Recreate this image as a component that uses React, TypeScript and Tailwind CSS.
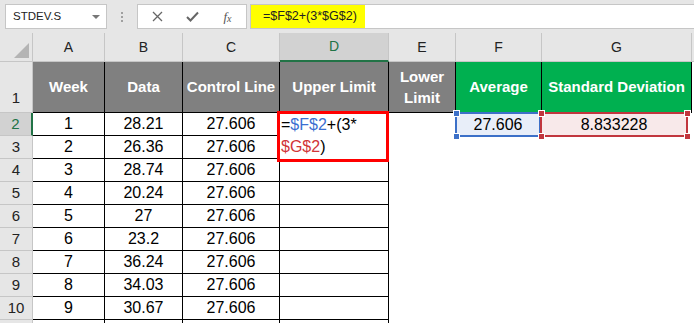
import React from "react";

const rows: [string, string, string][] = [
  ["1", "28.21", "27.606"],
  ["2", "26.36", "27.606"],
  ["3", "28.74", "27.606"],
  ["4", "20.24", "27.606"],
  ["5", "27", "27.606"],
  ["6", "23.2", "27.606"],
  ["7", "36.24", "27.606"],
  ["8", "34.03", "27.606"],
  ["9", "30.67", "27.606"],
];

const colLetters = ["A", "B", "C", "D", "E", "F", "G"];

function Handle({ color, x, y }: { color: string; x: number; y: number }) {
  return (
    <div
      className="absolute w-[7px] h-[7px] border border-white"
      style={{ left: x - 3, top: y - 3, backgroundColor: color }}
    />
  );
}

export default function App() {
  return (
    <div className="relative w-[694px] h-[323px] overflow-hidden bg-white font-['Liberation_Sans',Arial,sans-serif] text-black">
      {/* Formula bar */}
      <div className="h-[33px] bg-[#e6e6e6] flex items-start pt-[4px]">
        <div className="ml-[5px] w-[102px] h-[25px] bg-white border border-[#c6c6c6] flex items-center pl-[7px] pr-[6px] text-[11.5px] text-[#222]">
          <span className="flex-1">STDEV.S</span>
          <span className="w-0 h-0 border-l-[4px] border-r-[4px] border-t-[4px] border-l-transparent border-r-transparent border-t-[#777]" />
        </div>
        <div className="w-[30px] h-[25px] flex flex-col items-center justify-center gap-[2px]">
          <span className="w-[2px] h-[2px] bg-[#a0a0a0]" />
          <span className="w-[2px] h-[2px] bg-[#a0a0a0]" />
          <span className="w-[2px] h-[2px] bg-[#a0a0a0]" />
        </div>
        <div className="w-[110px] h-[25px] bg-white border border-[#c6c6c6] flex items-center">
          <div className="w-[37px] flex justify-center pl-[2px]">
            <svg width="11" height="11" viewBox="0 0 11 11">
              <path d="M1 1 L10 10 M10 1 L1 10" stroke="#666" strokeWidth="1.3" fill="none" />
            </svg>
          </div>
          <div className="w-[34px] flex justify-center">
            <svg width="13" height="11" viewBox="0 0 13 11">
              <path d="M1 6 L4.5 9.5 L12 1.5" stroke="#666" strokeWidth="2" fill="none" />
            </svg>
          </div>
          <div className="w-[37px] flex justify-center font-['Liberation_Serif',serif] italic text-[#555] text-[13px]">
            <span>f</span>
            <span className="text-[10px] mt-[4px]">x</span>
          </div>
        </div>
        <div className="ml-[3px] flex-1 h-[25px] bg-white border-y border-l border-[#c6c6c6] flex items-stretch">
          <div className="w-[114px] bg-[#ffff00] flex items-center pl-[12px] text-[12.5px] text-[#222]">
            =$F$2+(3*$G$2)
          </div>
        </div>
      </div>

      {/* Grid */}
      <div className="grid grid-cols-[33px_72px_78px_97px_109px_67px_86px_150px_1fr] grid-rows-[29px_51px_repeat(10,23px)]">
        {/* Column headers */}
        <div className="relative bg-[#e6e6e6] border-r border-b border-[#c6c6c6]">
          <svg className="absolute right-[3px] bottom-[3px]" width="15" height="15" viewBox="0 0 15 15">
            <path d="M15 0 L15 15 L0 15 Z" fill="#b4b4b4" />
          </svg>
        </div>
        {colLetters.map((l) =>
          l === "D" ? (
            <div
              key={l}
              className="bg-[#d2d2d2] border-r border-[#c6c6c6] border-b-2 border-b-[#217346] flex items-center justify-center text-[14px] text-[#217346]"
            >
              {l}
            </div>
          ) : (
            <div
              key={l}
              className="bg-[#e6e6e6] border-r border-b border-[#c6c6c6] flex items-center justify-center text-[14px] text-[#222]"
            >
              {l}
            </div>
          )
        )}
        <div className="bg-[#e6e6e6] border-b border-[#c6c6c6]" />

        {/* Row 1 */}
        <div className="bg-[#e6e6e6] border-r border-b border-[#c6c6c6] flex items-end justify-center pb-[3px] text-[15px] text-[#222]">
          1
        </div>
        {["Week", "Data", "Control Line", "Upper Limit"].map((t) => (
          <div
            key={t}
            className="bg-[#808080] border-r border-b border-black flex items-center justify-center text-white font-bold text-[15px]"
          >
            {t}
          </div>
        ))}
        <div className="bg-[#808080] border-r border-b border-black flex items-center justify-center text-center text-white font-bold text-[15px] leading-[21px]">
          Lower
          <br />
          Limit
        </div>
        <div className="bg-[#00b050] border-r border-b border-black flex items-center justify-center text-white font-bold text-[15px]">
          Average
        </div>
        <div className="bg-[#00b050] border-r border-b border-black flex items-center justify-center text-white font-bold text-[15px]">
          Standard Deviation
        </div>
        <div />

        {/* Data rows */}
        {rows.map((r, i) => {
          const n = i + 2;
          const sel = n === 2;
          return (
            <React.Fragment key={n}>
              <div
                className={
                  sel
                    ? "bg-[#d2d2d2] border-r-2 border-r-[#217346] border-b border-b-[#c6c6c6] flex items-center justify-center text-[15px] text-[#217346]"
                    : "bg-[#e6e6e6] border-r border-b border-[#c6c6c6] flex items-center justify-center text-[15px] text-[#222]"
                }
              >
                {n}
              </div>
              <div className="border-r border-b border-black flex items-center justify-center text-[16px]">
                {r[0]}
              </div>
              <div className="border-r border-b border-black flex items-center justify-center text-[16px]">
                {r[1]}
              </div>
              <div className="border-r border-b border-black flex items-center justify-center text-[16px]">
                {r[2]}
              </div>
              <div className="border-r border-b border-black" />
              <div />
              <div />
              <div />
              <div />
            </React.Fragment>
          );
        })}
        {/* Row 11 (only its top edge is visible) */}
        <div className="bg-[#e6e6e6] border-r border-[#c6c6c6]" />
        <div className="border-r border-black" />
        <div className="border-r border-black" />
        <div className="border-r border-black" />
        <div className="border-r border-black" />
        <div />
        <div />
        <div />
        <div />
      </div>

      {/* Red box around D2:D3 with formula */}
      <div className="absolute left-[277px] top-[111px] w-[112px] h-[51px] border-[3px] border-[#ff0000] bg-white" />
      <div className="absolute left-[281px] top-[114px] text-[16px] leading-[22px]">
        <div>
          =<span className="text-[#3b6fd1]">$F$2</span>+(3*
        </div>
        <div>
          <span className="text-[#d13438]">$G$2</span>)
        </div>
      </div>

      {/* F2 selection */}
      <div className="absolute left-[455px] top-[112px] w-[86px] h-[25px] border-2 border-[#3c70c8] bg-[#e8eef9] flex items-center justify-center text-[16px]">
        27.606
      </div>
      {/* G2 selection */}
      <div className="absolute left-[540px] top-[112px] w-[148px] h-[25px] border-2 border-[#c1363e] bg-[#f8e9ea] flex items-center justify-center text-[16px]">
        8.833228
      </div>
      <Handle color="#3c70c8" x={456} y={113} />
      <Handle color="#3c70c8" x={456} y={136} />
      <Handle color="#c1363e" x={541} y={113} />
      <Handle color="#c1363e" x={541} y={136} />
      <Handle color="#c1363e" x={687} y={113} />
      <Handle color="#c1363e" x={687} y={136} />
    </div>
  );
}
